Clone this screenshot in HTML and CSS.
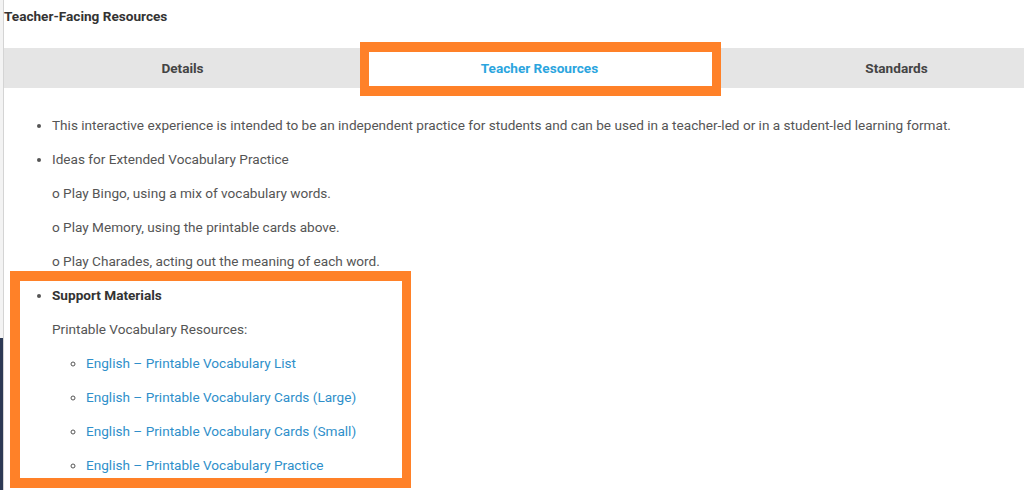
FILE: index.html
```
<!DOCTYPE html>
<html>
<head>
    <title>Teacher-Facing Resources</title>
    <link rel="stylesheet" href="styles.css">
</head>
<body>
    <div class="page">
        <div class="side"></div>
        <div class="main">
            <h4 class="title">Teacher-Facing Resources</h4>
            <div class="tabs">
                <div class="tab">Details</div>
                <div class="tab active">Teacher Resources</div>
                <div class="tab">Standards</div>
            </div>
            <div class="content">
                <ul class="list">
                    <li>This interactive experience is intended to be an independent practice for students and can be used in a teacher-led or in a student-led learning format.</li>
                    <li>Ideas for Extended Vocabulary Practice
                        <p>o Play Bingo, using a mix of vocabulary words.</p>
                        <p>o Play Memory, using the printable cards above.</p>
                        <p>o Play Charades, acting out the meaning of each word.</p>
                    </li>
                    <li><strong>Support Materials</strong>
                        <p>Printable Vocabulary Resources:</p>
                        <ul class="links">
                            <li><a href="#">English – Printable Vocabulary List</a></li>
                            <li><a href="#">English – Printable Vocabulary Cards (Large)</a></li>
                            <li><a href="#">English – Printable Vocabulary Cards (Small)</a></li>
                            <li><a href="#">English – Printable Vocabulary Practice</a></li>
                        </ul>
                    </li>
                </ul>
            </div>
        </div>
    </div>
    <!-- highlight boxes drawn over the page -->
    <div class="mark mark-tab"></div>
    <div class="mark mark-support"></div>
</body>
</html>
```

FILE: styles.css
```
body {
    font-family: Roboto, "Liberation Sans", sans-serif;
    font-size: 13.6px;
    color: #555;
    margin: 0;
    background-color: white;
    overflow: hidden;
}
.page {
    display: flex;
    min-height: 490px;
}
.side {
    width: 3px;
    flex-shrink: 0;
    background: linear-gradient(#f3f3f3 338px, #2d3a55 338px);
    border-right: 1px solid #d4d4d4;
}
.main {
    flex: 1;
    min-width: 0;
}
.title {
    margin: 0;
    padding: 8px 0 0 0;
    height: 48px;
    box-sizing: border-box;
    line-height: 16px;
    font-size: 13.6px;
    font-weight: bold;
    color: #333;
}
.tabs {
    display: flex;
    width: 1071px;
    height: 40px;
    background-color: #e5e5e5;
}
.tab {
    width: 357px;
    flex-shrink: 0;
    line-height: 40px;
    text-align: center;
    font-weight: bold;
    color: #444;
}
.tab.active {
    background-color: white;
    color: #2ba5de;
}
.content {
    padding-top: 27px;
}
.list {
    margin: 0;
    padding-left: 48px;
}
.list li {
    line-height: 20px;
    margin-bottom: 14px;
}
.list p {
    margin: 14px 0 0 0;
}
.list strong {
    color: #333;
}
.links {
    margin: 14px 0 0 0;
    padding-left: 34px;
    list-style-type: circle;
}
.links li {
    margin-bottom: 14px;
}
.links a {
    color: #2f8fca;
    text-decoration: none;
}
.mark {
    position: absolute;
    border: 10px solid #ff8128;
    box-sizing: border-box;
}
.mark-tab {
    left: 360px;
    top: 42px;
    width: 361px;
    height: 54px;
    border-left-width: 9px;
    border-right-width: 9px;
}
.mark-support {
    left: 10px;
    top: 271px;
    width: 401px;
    height: 217px;
    border-right-width: 9px;
}
```
